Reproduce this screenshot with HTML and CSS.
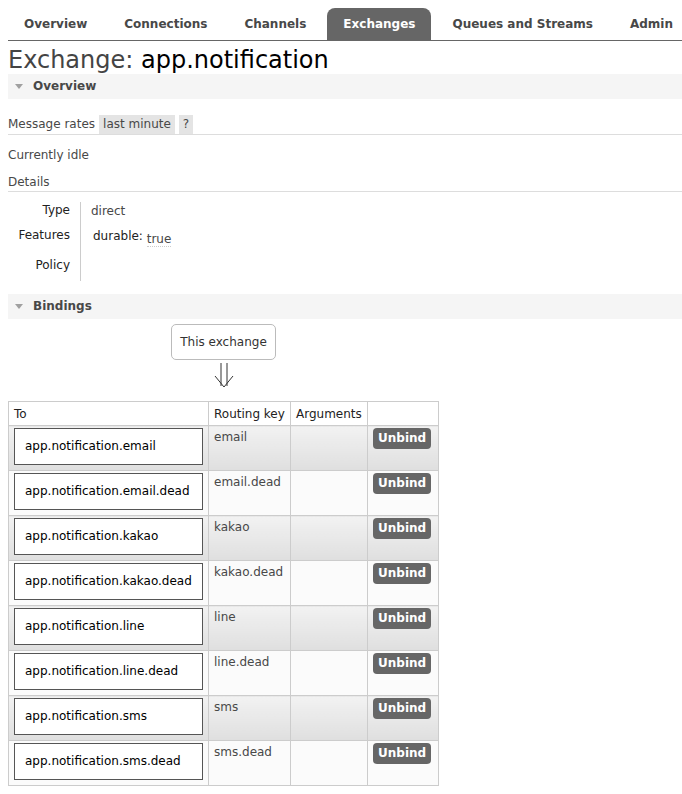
FILE: index.html
```html
<!DOCTYPE html>
<html>
<head>
<meta charset="utf-8">
<link rel="stylesheet" href="styles.css">
</head>
<body>
<div class="page">
  <ul class="tabs">
    <li>Overview</li>
    <li>Connections</li>
    <li>Channels</li>
    <li class="active">Exchanges</li>
    <li>Queues and Streams</li>
    <li>Admin</li>
  </ul>
  <h1><span class="h1-label">Exchange:</span> app.notification</h1>

  <div class="section">
    <h2 class="bar"><span class="tri"></span>Overview</h2>
    <div class="rates">
      <span>Message rates</span>
      <span class="pill">last minute</span>
      <span class="pill">?</span>
    </div>
    <p class="idle">Currently idle</p>
    <h3 class="sub">Details</h3>
    <table class="facts">
      <tr><th>Type</th><td>direct</td></tr>
      <tr><th>Features</th><td><span class="key">durable:</span> <span class="val">true</span></td></tr>
      <tr class="last"><th>Policy</th><td></td></tr>
    </table>
  </div>

  <div class="section">
    <h2 class="bar"><span class="tri"></span>Bindings</h2>
    <div class="bindings">
      <div class="source">
        <span class="exbox">This exchange</span>
        <svg class="arrow" width="20" height="25" viewBox="0 0 20 25">
          <path d="M7 0 V23 M13 0 V23" stroke="#333" stroke-width="1" fill="none"/>
          <path d="M1 13 L10 24 L19 13" stroke="#333" stroke-width="1" fill="none"/>
        </svg>
      </div>
      <table class="list">
        <colgroup>
          <col class="c-to"><col class="c-rk"><col class="c-args"><col class="c-act">
        </colgroup>
        <thead>
          <tr><th>To</th><th>Routing key</th><th>Arguments</th><th></th></tr>
        </thead>
        <tbody>
          <tr class="alt1"><td><span class="queue">app.notification.email</span></td><td>email</td><td></td><td><span class="btn">Unbind</span></td></tr>
          <tr class="alt2"><td><span class="queue">app.notification.email.dead</span></td><td>email.dead</td><td></td><td><span class="btn">Unbind</span></td></tr>
          <tr class="alt1"><td><span class="queue">app.notification.kakao</span></td><td>kakao</td><td></td><td><span class="btn">Unbind</span></td></tr>
          <tr class="alt2"><td><span class="queue">app.notification.kakao.dead</span></td><td>kakao.dead</td><td></td><td><span class="btn">Unbind</span></td></tr>
          <tr class="alt1"><td><span class="queue">app.notification.line</span></td><td>line</td><td></td><td><span class="btn">Unbind</span></td></tr>
          <tr class="alt2"><td><span class="queue">app.notification.line.dead</span></td><td>line.dead</td><td></td><td><span class="btn">Unbind</span></td></tr>
          <tr class="alt1"><td><span class="queue">app.notification.sms</span></td><td>sms</td><td></td><td><span class="btn">Unbind</span></td></tr>
          <tr class="alt2"><td><span class="queue">app.notification.sms.dead</span></td><td>sms.dead</td><td></td><td><span class="btn">Unbind</span></td></tr>
        </tbody>
      </table>
    </div>
  </div>
</div>
</body>
</html>
```
FILE: styles.css
```css
html, body {
  margin: 0;
  padding: 0;
  background: #fff;
}
body {
  font-family: Verdana, "DejaVu Sans", sans-serif;
  font-size: 12px;
  color: #484848;
}
.page {
  padding: 8px 0 0 8px;
}
.tabs {
  list-style: none;
  margin: 0;
  padding: 0;
  display: flex;
  border-bottom: 1px solid #666;
  height: 32px;
}
.tabs li {
  font-weight: bold;
  font-size: 12px;
  color: #484848;
  padding: 0 16px;
  margin-right: 5px;
  line-height: 33px;
  height: 32px;
  white-space: nowrap;
}
.tabs li.active {
  background: #666;
  color: #fff;
  border-radius: 8px 8px 0 0;
}
h1 {
  margin: 0;
  font-weight: normal;
  font-size: 24px;
  line-height: 27px;
  padding-top: 6px;
  color: #000;
}
.h1-label {
  color: #444;
}
.bar {
  margin: 0;
  background: #f5f5f5;
  height: 25px;
  line-height: 25px;
  font-size: 12px;
  font-weight: bold;
  color: #484848;
  display: flex;
  align-items: center;
  padding-left: 7px;
}
.tri {
  display: inline-block;
  width: 0;
  height: 0;
  border-left: 4px solid transparent;
  border-right: 4px solid transparent;
  border-top: 5px solid #a0a0a0;
  margin-right: 10px;
}
.rates {
  margin-top: 16px;
  height: 19px;
  line-height: 19px;
  border-bottom: 1px solid #ddd;
  display: flex;
  gap: 4px;
}
.pill {
  background: #e4e4e4;
  padding: 0 4px;
}
.idle {
  margin: 0;
  padding-top: 11px;
  line-height: 18px;
}
.sub {
  margin: 0;
  font-weight: normal;
  font-size: 12px;
  padding-top: 9px;
  line-height: 18px;
  border-bottom: 1px solid #ddd;
  padding-bottom: 0;
}
.facts {
  border-collapse: collapse;
  margin: 10px 0 13px 0;
}
.facts th {
  font-weight: normal;
  color: #222;
  text-align: right;
  width: 62px;
  padding: 1px 10px 2px 0;
  border-right: 1px solid #ccc;
  vertical-align: top;
  height: 22px;
  line-height: 15px;
  box-sizing: content-box;
}
.facts tr.last th {
  height: 21px;
  padding-top: 6px;
}
.facts td {
  padding: 2px 0 2px 10px;
  vertical-align: top;
  line-height: 15px;
}
.facts .key {
  color: #222;
  margin-left: 2px;
}
.facts .val {
  border-bottom: 1px dotted #ccc;
  position: relative;
  top: 3px;
}
.bindings {
  display: inline-block;
  margin-top: 5px;
}
.source {
  display: flex;
  flex-direction: column;
  align-items: center;
}
.exbox {
  display: inline-block;
  border: 1px solid #bbb;
  border-radius: 5px;
  padding: 0 8px;
  height: 34px;
  line-height: 34px;
  color: #333;
  background: #fff;
}
.arrow {
  display: block;
  margin-top: 3px;
  margin-bottom: 13px;
}
.list {
  border-collapse: collapse;
  border: 1px solid #ccc;
  table-layout: fixed;
  width: 431px;
}
.list .c-to { width: 200px; }
.list .c-rk { width: 82px; }
.list .c-args { width: 77px; }
.list .c-act { width: 71px; }
.list th, .list td {
  border: 1px solid #ccc;
  text-align: left;
}
.list th {
  font-weight: normal;
  color: #222;
  height: 23px;
  padding: 0 5px;
  white-space: nowrap;
}
.list td {
  vertical-align: top;
  padding: 4px 6px 0 5px;
  color: #484848;
}
.list td:first-child {
  padding: 2px 5px 5px 5px;
}
.list td:last-child {
  padding: 2px 4px 0 5px;
}
.list tr.alt1 td {
  background: linear-gradient(#f2f2f2, #dfdfdf);
}
.list tr.alt2 td {
  background: #fbfbfb;
}
.queue {
  display: block;
  box-sizing: border-box;
  height: 37px;
  line-height: 35px;
  border: 1px solid #555;
  background: #fff;
  color: #000;
  padding-left: 10px;
  white-space: nowrap;
}
.btn {
  display: inline-block;
  background: #666;
  color: #fff;
  font-weight: bold;
  border-radius: 4px;
  height: 21px;
  line-height: 21px;
  padding: 0 5px;
}
```
